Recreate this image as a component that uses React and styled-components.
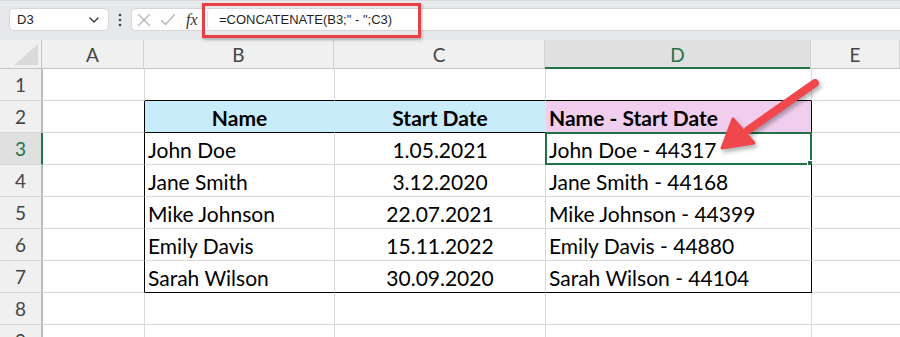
import React from 'react';
import styled, { createGlobalStyle } from 'styled-components';

const GlobalStyle = createGlobalStyle`
  html, body {
    margin: 0;
    padding: 0;
    background: #ffffff;
  }
  body {
    width: 900px;
    height: 337px;
    overflow: hidden;
  }
`;

const GREEN = '#217346';
const GRID = '#d9d9d9';
const BLACK = '#000000';

const columns = [
  { key: 'A', width: 102 },
  { key: 'B', width: 190 },
  { key: 'C', width: 211 },
  { key: 'D', width: 266 },
  { key: 'E', width: 89 },
];

const people = [
  { name: 'John Doe', date: '1.05.2021', serial: 44317 },
  { name: 'Jane Smith', date: '3.12.2020', serial: 44168 },
  { name: 'Mike Johnson', date: '22.07.2021', serial: 44399 },
  { name: 'Emily Davis', date: '15.11.2022', serial: 44880 },
  { name: 'Sarah Wilson', date: '30.09.2020', serial: 44104 },
];

const ChevronIcon = () => (
  <svg width="10" height="6" viewBox="0 0 10 6">
    <path d="M1 1 L5 5 L9 1" fill="none" stroke="#333" strokeWidth="1.3" strokeLinecap="round" strokeLinejoin="round" />
  </svg>
);

const DotsIcon = () => (
  <svg width="4" height="14" viewBox="0 0 4 14">
    <circle cx="2" cy="2" r="1.3" fill="#444" />
    <circle cx="2" cy="7" r="1.3" fill="#444" />
    <circle cx="2" cy="12" r="1.3" fill="#444" />
  </svg>
);

const CrossIcon = () => (
  <svg width="14" height="14" viewBox="0 0 14 14">
    <path d="M1.5 1.5 L12.5 12.5 M12.5 1.5 L1.5 12.5" stroke="#b4b4b4" strokeWidth="1.2" strokeLinecap="round" />
  </svg>
);

const CheckIcon = () => (
  <svg width="16" height="14" viewBox="0 0 16 14">
    <path d="M1.5 7.5 L5.5 11.5 L14.5 1.5" fill="none" stroke="#b4b4b4" strokeWidth="1.2" strokeLinecap="round" strokeLinejoin="round" />
  </svg>
);

const CornerTriangle = () => (
  <svg width="24" height="21" viewBox="0 0 24 21">
    <polygon points="24,0 24,21 0,21" fill="#dadada" />
  </svg>
);

const Arrow = () => (
  <ArrowSvg width="900" height="337" viewBox="0 0 900 337">
    <g fill="#f0474d" stroke="#f0474d" strokeLinecap="round" strokeLinejoin="round">
      <line x1="815" y1="83" x2="748" y2="130" strokeWidth="8" />
      <polygon points="722,148 733,119 754,143" strokeWidth="3" />
    </g>
  </ArrowSvg>
);

export default function App() {
  return (
    <Page>
      <GlobalStyle />
      <Toolbar>
        <NameBox>
          <span>D3</span>
          <ChevronIcon />
        </NameBox>
        <Dots>
          <DotsIcon />
        </Dots>
        <FormulaBox>
          <FormulaIcons>
            <CrossIcon />
            <CheckIcon />
            <Fx>fx</Fx>
          </FormulaIcons>
          <FormulaInput>=CONCATENATE(B3;" - ";C3)</FormulaInput>
        </FormulaBox>
        <Highlight />
      </Toolbar>

      <Sheet>
        <HeaderRow>
          <Corner>
            <CornerTriangle />
          </Corner>
          {columns.map((c) => (
            <ColHead key={c.key} width={c.width} selected={c.key === 'D'}>
              {c.key}
            </ColHead>
          ))}
        </HeaderRow>

        <Row>
          <RowHead>1</RowHead>
          <Cell width={102} />
          <Cell width={190} bottom={BLACK} />
          <Cell width={211} bottom={BLACK} />
          <Cell width={266} bottom={BLACK} />
          <Cell width={89} />
        </Row>

        <Row>
          <RowHead>2</RowHead>
          <Cell width={102} right={BLACK} />
          <Cell width={190} bg="#c9ecfa" right="#c9ecfa" bottom={BLACK} align="center" bold>
            Name
          </Cell>
          <Cell width={211} bg="#c9ecfa" right="#c9ecfa" bottom={BLACK} align="center" bold>
            Start Date
          </Cell>
          <Cell width={266} bg="#f1ceee" right={BLACK} bottom={BLACK} bold>
            Name - Start Date
          </Cell>
          <Cell width={89} />
        </Row>

        {people.map((p, i) => (
          <Row key={p.name}>
            <RowHead selected={i === 0}>{i + 3}</RowHead>
            <Cell width={102} right={BLACK} />
            <Cell width={190} bottom={i === people.length - 1 ? BLACK : GRID}>
              {p.name}
            </Cell>
            <Cell width={211} align="center" bottom={i === people.length - 1 ? BLACK : GRID}>
              {p.date}
            </Cell>
            <Cell width={266} right={BLACK} bottom={i === people.length - 1 ? BLACK : GRID}>
              {p.name} - {p.serial}
              {i === 0 && (
                <Selection>
                  <FillHandle />
                </Selection>
              )}
            </Cell>
            <Cell width={89} />
          </Row>
        ))}

        {[8, 9].map((n) => (
          <Row key={n}>
            <RowHead>{n}</RowHead>
            {columns.map((c) => (
              <Cell key={c.key} width={c.width} />
            ))}
          </Row>
        ))}
      </Sheet>

      <Arrow />
    </Page>
  );
}

const Page = styled.div`
  position: relative;
  width: 900px;
  height: 337px;
  overflow: hidden;
  background: #ffffff;
  font-family: 'Lato', 'Noto Sans', sans-serif;
`;

const Toolbar = styled.div`
  position: relative;
  height: 40px;
  box-sizing: border-box;
  padding: 7px 0 9px 9px;
  display: flex;
  align-items: stretch;
  background: #e6e8eb;
  border-top: 1px solid #d9dbdf;
  font-family: 'Liberation Sans', Arial, sans-serif;
`;

const NameBox = styled.div`
  width: 100px;
  box-sizing: border-box;
  display: flex;
  align-items: center;
  justify-content: space-between;
  padding: 0 9px 0 7px;
  background: #ffffff;
  border: 1px solid #d4d6da;
  border-radius: 5px;
  font-size: 13px;
  color: #222;
`;

const Dots = styled.div`
  width: 22px;
  display: flex;
  align-items: center;
  justify-content: center;
`;

const FormulaBox = styled.div`
  flex: 1;
  display: flex;
  background: #ffffff;
  border: 1px solid #d4d6da;
  border-right: none;
  border-radius: 5px 0 0 5px;
`;

const FormulaIcons = styled.div`
  width: 75px;
  display: flex;
  align-items: center;
  gap: 9px;
  padding-left: 5px;
  box-sizing: border-box;
`;

const Fx = styled.span`
  font-family: 'Liberation Serif', 'Times New Roman', serif;
  font-style: italic;
  font-size: 16px;
  color: #333;
  margin-left: 1px;
`;

const FormulaInput = styled.div`
  flex: 1;
  display: flex;
  align-items: center;
  padding-left: 11px;
  border-left: 1px solid #e3e4e6;
  border-radius: 4px 0 0 4px;
  font-size: 13px;
  color: #1f1f1f;
`;

const Highlight = styled.div`
  position: absolute;
  left: 202px;
  top: 2px;
  width: 219px;
  height: 35px;
  box-sizing: border-box;
  border: 3px solid #e83f44;
  box-shadow: 1px 2px 3px rgba(0, 0, 0, 0.25);
`;

const Sheet = styled.div`
  display: flex;
  flex-direction: column;
  color: #000;
`;

const HeaderRow = styled.div`
  display: flex;
  height: 29px;
  background: #f0f0f0;
  border-bottom: 1px solid #c6c6c6;
  box-sizing: border-box;
`;

const Corner = styled.div`
  width: 43px;
  box-sizing: border-box;
  border-right: 1px solid #c6c6c6;
  display: flex;
  align-items: flex-end;
  justify-content: flex-end;
  padding: 0 3px 3px 0;
`;

const ColHead = styled.div`
  width: ${({ width }) => width}px;
  box-sizing: border-box;
  flex-shrink: 0;
  display: flex;
  align-items: center;
  justify-content: center;
  border-right: 1px solid #d2d2d2;
  font-size: 19px;
  color: ${({ selected }) => (selected ? GREEN : '#444')};
  background: ${({ selected }) => (selected ? '#e0e0e0' : 'transparent')};
  box-shadow: ${({ selected }) => (selected ? `inset 0 -2px 0 ${GREEN}` : 'none')};
  margin-bottom: ${({ selected }) => (selected ? '-1px' : '0')};
`;

const Row = styled.div`
  display: flex;
  height: 32px;
`;

const RowHead = styled.div`
  width: 43px;
  flex-shrink: 0;
  box-sizing: border-box;
  display: flex;
  align-items: center;
  justify-content: center;
  background: ${({ selected }) => (selected ? '#e0e0e0' : '#f0f0f0')};
  border-right: 2px solid ${({ selected }) => (selected ? GREEN : '#bcbcbc')};
  border-bottom: 1px solid #d4d4d4;
  font-size: 19px;
  color: ${({ selected }) => (selected ? GREEN : '#444')};
`;

const Cell = styled.div`
  position: relative;
  width: ${({ width }) => width}px;
  flex-shrink: 0;
  box-sizing: border-box;
  display: flex;
  align-items: center;
  justify-content: ${({ align }) => (align === 'center' ? 'center' : 'flex-start')};
  padding: 2px 3px 0;
  background: ${({ bg }) => bg || '#ffffff'};
  border-right: 1px solid ${({ right }) => right || GRID};
  border-bottom: 1px solid ${({ bottom }) => bottom || GRID};
  font-size: 21px;
  font-weight: ${({ bold }) => (bold ? 700 : 400)};
  white-space: nowrap;
`;

const Selection = styled.div`
  position: absolute;
  left: -1px;
  top: -1px;
  right: -1px;
  bottom: -1px;
  border: 2px solid ${GREEN};
  pointer-events: none;
`;

const FillHandle = styled.div`
  position: absolute;
  right: -5px;
  bottom: -5px;
  width: 6px;
  height: 6px;
  background: ${GREEN};
  border: 1px solid #ffffff;
`;

const ArrowSvg = styled.svg`
  position: absolute;
  left: 0;
  top: 0;
  pointer-events: none;
  filter: drop-shadow(2px 3px 2px rgba(0, 0, 0, 0.3));
`;
